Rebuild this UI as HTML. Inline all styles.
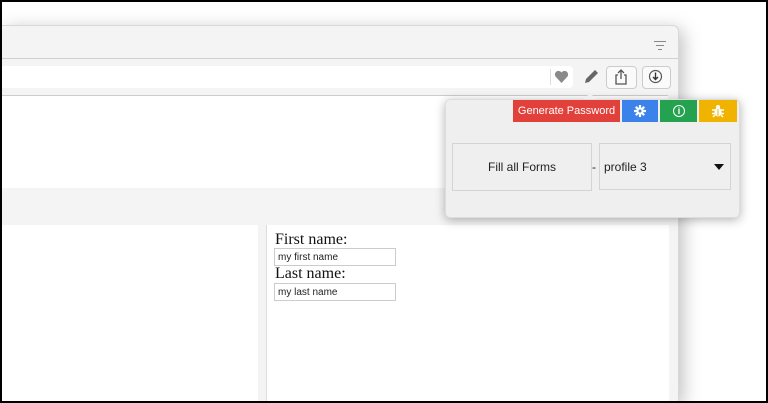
<!DOCTYPE html><html><head><style>
body{margin:0;width:768px;height:403px;background:#fff;position:relative;overflow:hidden;font-family:"Liberation Sans",sans-serif}
.a{position:absolute}
</style></head><body>
<div class="a" style="left:1px;top:25px;width:677px;height:376px;background:#f4f4f4;border-radius:0 6px 0 0;box-shadow:4px 4px 18px rgba(0,0,0,.25);border:1px solid #d8d8d8;border-left:none;border-bottom:none"></div>
<div class="a" style="left:1px;top:58px;width:677px;height:1px;background:#d0d0d0"></div>
<div class="a" style="left:654px;top:41px;width:12px;height:1px;background:#888"></div>
<div class="a" style="left:656px;top:45px;width:8px;height:1px;background:#888"></div>
<div class="a" style="left:658px;top:49px;width:4px;height:1px;background:#888"></div>
<div class="a" style="left:1px;top:66px;width:572px;height:22px;background:#fff;border-radius:0 4px 4px 0"></div>
<div class="a" style="left:550px;top:69px;width:1px;height:16px;background:#ddd"></div>
<svg class="a" style="left:554px;top:70px" width="15" height="14"><path d="M7.5 13 L1.5 6.5 A3.2 3.2 0 0 1 7.5 2.5 A3.2 3.2 0 0 1 13.5 6.5 Z" fill="#8a8a8a"/></svg>
<svg class="a" style="left:582px;top:68px" width="18" height="18"><path d="M3 15 L4 11 L13 2 L16 5 L7 14 Z" fill="#666"/></svg>
<div class="a" style="left:606px;top:66px;width:29px;height:21px;background:#fafafa;border:1px solid #ccc;border-radius:4px"></div>
<svg class="a" style="left:613px;top:68px" width="16" height="18"><path d="M5 7H3V16H13V7H11M8 11V2M5 5L8 2L11 5" fill="none" stroke="#555" stroke-width="1.3"/></svg>
<div class="a" style="left:642px;top:66px;width:27px;height:21px;background:#fafafa;border:1px solid #ccc;border-radius:4px"></div>
<svg class="a" style="left:648px;top:69px" width="15" height="15"><circle cx="7.5" cy="7.5" r="6" fill="none" stroke="#555" stroke-width="1.2"/><path d="M7.5 3.5V10M5 8L7.5 10.5L10 8" fill="none" stroke="#333" stroke-width="1.4"/></svg>
<div class="a" style="left:1px;top:95px;width:667px;height:92px;background:#fff;border-top:1px solid #ccc"></div>
<div class="a" style="left:1px;top:225px;width:257px;height:176px;background:#fff"></div>
<div class="a" style="left:266px;top:225px;width:402px;height:176px;background:#fff;border-left:1px solid #ddd"></div>
<div class="a" style="left:275px;top:231px;font-family:'Liberation Serif',serif;font-size:16px;color:#111">First name:</div>
<div class="a" style="left:274px;top:248px;border:1px solid #ccc;font-size:10px;line-height:18px;padding-left:3px;box-sizing:border-box;width:122px;height:18px;color:#222">my first name</div>
<div class="a" style="left:275px;top:265px;font-family:'Liberation Serif',serif;font-size:16px;color:#111">Last name:</div>
<div class="a" style="left:274px;top:283px;border:1px solid #ccc;font-size:10px;line-height:18px;padding-left:3px;box-sizing:border-box;width:122px;height:18px;color:#222">my last name</div>
<div class="a" style="left:445px;top:99px;width:293px;height:117px;background:#efefef;border:1px solid #ddd;border-radius:5px;box-shadow:0 2px 10px rgba(0,0,0,.3)"></div>
<div class="a" style="left:584px;top:93px;width:0;height:0;border:6px solid transparent;border-bottom-color:#efefef;border-top:none"></div>
<div class="a" style="left:513px;top:100px;width:107px;height:22px;background:#e2403a;color:#fff;font-size:11px;line-height:22px;text-align:center">Generate Password</div>
<div class="a" style="left:622px;top:100px;width:36px;height:22px;background:#3b82ea"></div>
<svg class="a" style="left:633px;top:104px" width="14" height="14"><g stroke="#fff" stroke-width="2.2"><path d="M7 1V13M1 7H13M2.8 2.8L11.2 11.2M11.2 2.8L2.8 11.2"/></g><circle cx="7" cy="7" r="3.5" fill="#fff"/><circle cx="7" cy="7" r="1.5" fill="#3b82ea"/></svg>
<div class="a" style="left:660px;top:100px;width:37px;height:22px;background:#25a24f"></div>
<div class="a" style="left:673px;top:105px;width:10px;height:10px;border:1.5px solid #fff;border-radius:50%;color:#fff;font-size:9px;font-weight:bold;text-align:center;line-height:10px">i</div>
<div class="a" style="left:699px;top:100px;width:38px;height:22px;background:#f0b400"></div>
<svg class="a" style="left:711px;top:104px" width="14" height="14"><ellipse cx="7" cy="8" rx="3.5" ry="4.5" fill="#fff"/><circle cx="7" cy="3" r="2" fill="#fff"/><path d="M1 6H13M1 9.5H13M2 13L4 11M12 13L10 11" stroke="#fff" stroke-width="1.4"/><path d="M7 5V12" stroke="#f0b400" stroke-width="1"/></svg>
<div class="a" style="left:452px;top:143px;width:138px;height:46px;border:1px solid #d4d4d4;font-size:12px;line-height:46px;text-align:center;color:#222">Fill all Forms</div>
<div class="a" style="left:592px;top:160px;font-size:12px;color:#222">-</div>
<div class="a" style="left:599px;top:143px;width:132px;height:47px;border:1px solid #d4d4d4;font-size:12px;line-height:46px;color:#222;box-sizing:border-box;padding-left:4px">profile 3</div>
<div class="a" style="left:714px;top:164px;border:5px solid transparent;border-top:6px solid #111;border-bottom:none"></div>
<div class="a" style="left:0;top:0;width:764px;height:399px;border:2px solid #000"></div>
</body></html>
